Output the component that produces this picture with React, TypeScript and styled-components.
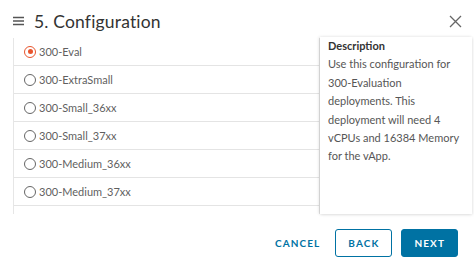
import * as React from 'react';
import styled, { createGlobalStyle } from 'styled-components';

const GlobalStyle = createGlobalStyle`
  html, body {
    margin: 0;
    padding: 0;
    background: #fff;
  }
  body {
    font-family: Lato, "Noto Sans", sans-serif;
    color: #565656;
  }
`;

const Modal = styled.div`
  width: 474px;
  height: 272px;
  display: flex;
  flex-direction: column;
  overflow: hidden;
  background: #fff;
`;

const Header = styled.div`
  height: 38px;
  display: flex;
  align-items: center;
  padding: 4px 12px 0 13px;
  box-sizing: border-box;
`;

const Title = styled.h3`
  flex: 1;
  margin: 0 0 0 10px;
  font-size: 17.5px;
  font-weight: 400;
  color: #333;
  letter-spacing: 0.01em;
`;

const IconButton = styled.button`
  border: 0;
  background: none;
  padding: 0;
  display: flex;
  align-items: center;
  color: #666;
`;

const Body = styled.div`
  display: grid;
  grid-template-columns: 307px 152px;
  padding-left: 13px;
  height: 176px;
`;

const List = styled.ul`
  margin: 0;
  padding: 0;
  list-style: none;
  border-left: 1px solid #e6e6e6;
  border-right: 1px solid #e6e6e6;
  overflow: hidden;
`;

const Row = styled.li`
  height: 28px;
  display: flex;
  align-items: center;
  padding-left: 10px;
  gap: 3px;
  border-bottom: 1px solid #e4e4e4;
  box-sizing: border-box;
  font-size: 11px;
  color: #5f5f5f;
`;

const Radio = styled.span<{ $checked?: boolean }>`
  width: 12px;
  height: 12px;
  border-radius: 50%;
  box-sizing: border-box;
  border: 1.5px solid ${({ $checked }) => ($checked ? '#e8552d' : '#666')};
  display: flex;
  align-items: center;
  justify-content: center;

  &::after {
    content: '';
    width: 5px;
    height: 5px;
    border-radius: 50%;
    background: ${({ $checked }) => ($checked ? '#e8552d' : 'transparent')};
  }
`;

const Panel = styled.div`
  background: #fff;
  box-shadow: -1px 0 3px rgba(0, 0, 0, 0.12), 1px 1px 3px rgba(0, 0, 0, 0.08);
  margin-top: -1px;
  padding: 0 8px;
  font-size: 11px;
  line-height: 18.4px;
  color: #565656;
`;

const PanelTitle = styled.div`
  font-weight: 700;
  color: #333;
`;

const Footer = styled.div`
  flex: 1;
  display: flex;
  align-items: center;
  justify-content: flex-end;
  padding: 0 16px 0 0;
  gap: 9px;
`;

const Button = styled.button<{ $variant: 'flat' | 'outline' | 'solid' }>`
  height: 28px;
  min-width: 56px;
  padding: 0 ${({ $variant }) => ($variant === 'flat' ? 5 : 12)}px;
  box-sizing: border-box;
  border-radius: 3px;
  font-family: Lato, "Noto Sans", sans-serif;
  font-size: 10px;
  font-weight: 700;
  letter-spacing: 0.11em;
  border: 1px solid ${({ $variant }) => ($variant === 'flat' ? 'transparent' : '#0072a3')};
  background: ${({ $variant }) => ($variant === 'solid' ? '#0072a3' : 'transparent')};
  color: ${({ $variant }) => ($variant === 'solid' ? '#fff' : '#0072a3')};
`;

const configs = [
  '300-Eval',
  '300-ExtraSmall',
  '300-Small_36xx',
  '300-Small_37xx',
  '300-Medium_36xx',
  '300-Medium_37xx',
];

const App: React.FC = () => (
  <Modal>
    <GlobalStyle />
    <Header>
      <IconButton>
        <svg width="11" height="10" viewBox="0 0 11 10">
          <path d="M0 1.5h11M0 5h11M0 8.5h11" stroke="#555" strokeWidth="1.4" />
        </svg>
      </IconButton>
      <Title>5. Configuration</Title>
      <IconButton>
        <svg width="13" height="13" viewBox="0 0 13 13">
          <path d="M1 1l11 11M12 1L1 12" stroke="#666" strokeWidth="1.3" />
        </svg>
      </IconButton>
    </Header>
    <Body>
      <List>
        {configs.map((name, i) => (
          <Row key={name}>
            <Radio $checked={i === 0} />
            {name}
          </Row>
        ))}
      </List>
      <Panel>
        <PanelTitle>Description</PanelTitle>
        Use this configuration for 300-Evaluation deployments. This deployment will need 4 vCPUs
        and 16384 Memory for the vApp.
      </Panel>
    </Body>
    <Footer>
      <Button $variant="flat">CANCEL</Button>
      <Button $variant="outline">BACK</Button>
      <Button $variant="solid">NEXT</Button>
    </Footer>
  </Modal>
);

export default App;
